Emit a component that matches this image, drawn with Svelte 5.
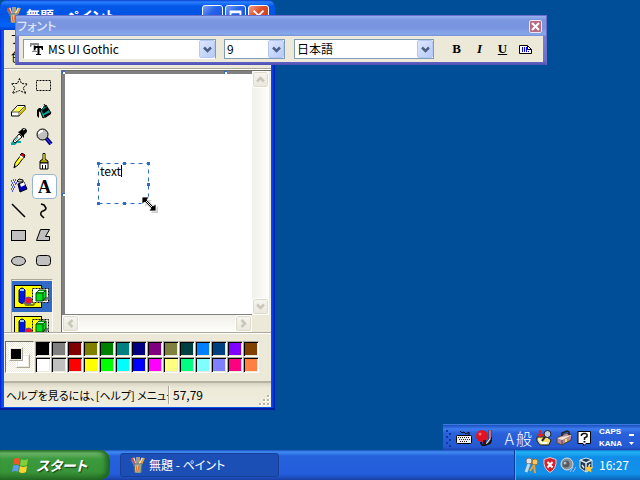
<script>
    const tools = [
        'Free-Form Select', 'Select', 'Eraser', 'Fill', 'Pick Color', 'Magnifier', 'Pencil', 'Brush',
        'Airbrush', 'Text', 'Line', 'Curve', 'Rectangle', 'Polygon', 'Ellipse', 'Rounded Rectangle'
    ];
    const colors = [
        '#000000', '#808080', '#800000', '#808000', '#008000', '#008080', '#000080',
        '#800080', '#808040', '#004040', '#0080ff', '#004080', '#8000ff', '#804000',
        '#ffffff', '#c0c0c0', '#ff0000', '#ffff00', '#00ff00', '#00ffff', '#0000ff',
        '#ff00ff', '#ffff80', '#00ff80', '#80ffff', '#8080ff', '#ff0080', '#ff8040'
    ];
    const handles = [[0, 0], [26, 0], [50, 0], [0, 21], [50, 21], [0, 40], [26, 40], [50, 40]];

    let activeTool = $state('Text');
    let foreground = $state('#000000');
    let text = $state('text');
</script>

{#snippet brushes()}
    <svg class="icon16" viewBox="0 0 16 16" aria-hidden="true">
        <path d="M3 1l2 7M8 0v8M13 1l-3 7" stroke="#eee" stroke-width="3" />
        <path d="M2 1l3 7" stroke="#d34a2c" stroke-width="2" />
        <path d="M8 0v8" stroke="#c09a50" stroke-width="2" />
        <path d="M14 1l-4 8" stroke="#e9a021" stroke-width="2" />
        <path d="M1 3l3 5" stroke="#3c8ae0" stroke-width="1" />
        <path d="M4 7h8l-1 9H5z" fill="#b9c9c5" stroke="#506b75" />
        <path d="M6 8l1 7M9 8l-1 7" stroke="#e76f2b" />
        <path d="M10 8v7" stroke="#5e8d49" />
    </svg>
{/snippet}

{#snippet chevron(dir)}
    <svg class="chevron {dir}" viewBox="0 0 9 9" aria-hidden="true">
        <path d="M1 2.5l3.500 3.500 3.500-3.500" fill="none" stroke="currentColor" stroke-width="2.500" />
    </svg>
{/snippet}

{#snippet toolIcon(name)}
    <svg class="tool-icon" viewBox="0 0 17 17" aria-hidden="true">
        {#if name === 'Free-Form Select'}
            <path d="M8.500.5l2 5 6 .5-4.500 4 3 5.500-6.500-3-7 3 2.500-5.500-3.500-4.500h6z" fill="none" stroke="#000" stroke-dasharray="2 1" />
        {:else if name === 'Select'}
            <rect x=".5" y="2.500" width="14" height="10" fill="none" stroke="#000" stroke-dasharray="2 1" />
        {:else if name === 'Eraser'}
            <path d="M.5 9l6-6.500h7.500v4l-6 6.500H.5z" fill="#fff" stroke="#000" />
            <path d="M2 9l5-5h6l-5 5z" fill="#ffff40" />
            <path d="M9 9l5-5v3l-5 5z" fill="#c8b800" />
            <path d="M1 9h7l6-6M8 9v4" fill="none" stroke="#555" />
        {:else if name === 'Fill'}
            <path d="M4 7l6-5 5 8-8 5z" fill="#00a6a0" stroke="#000" />
            <path d="M6 7l5-3 2 3-6 4zM8 12l7-3v2l-6 4z" fill="#000" />
            <path d="M8 1l3 5" stroke="#000" />
            <path d="M5 5H3L1 7v6l2 2V9l3-2" fill="#000" />
            <path d="M5 6l2-2" stroke="#fff" />
        {:else if name === 'Pick Color'}
            <path d="M0 15q2-3 5-2h5v2H6l-2 2H0z" fill="#00a6a0" />
            <path d="M3 14l-1-1 6-7 3 3-7 6z" fill="#fff" stroke="#000" />
            <path d="M4 13l3-4" stroke="#00a6a0" />
            <path d="M7 4l2-1 2-2q2-2 4 0t0 4l-2 2v3l-6-6z" fill="#000" />
            <path d="M12 2l2-1" stroke="#fff" />
        {:else if name === 'Magnifier'}
            <path d="M10 10l5 6" stroke="#000080" stroke-width="4" />
            <path d="M10 10l5 6" stroke="#4949ff" stroke-width="1" />
            <circle cx="6.500" cy="6.500" r="5.500" fill="#c0c0c0" stroke="#000" />
            <path d="M3 6q0-3 4-3" fill="none" stroke="#fff" stroke-width="2" />
        {:else if name === 'Pencil'}
            <path d="M3 15l1-5 6-8 3 2-6 8z" fill="#ffff20" stroke="#000" />
            <path d="M9 2l2-2 3 2-1 3z" fill="#e00" stroke="#000" />
            <path d="M9 3l3 2" stroke="#fff" stroke-width="2" />
            <path d="M3 15v-3l2 1z" fill="#000" />
        {:else if name === 'Brush'}
            <path d="M7 .5h2V6l3 2v2H4V8l3-2z" fill="#a9a000" stroke="#000" />
            <path d="M4 10h8v6H4z" fill="#fff" stroke="#000" />
            <path d="M6.500 12v4M9.500 12v4" stroke="#000" />
            <path d="M8 1v6" stroke="#ffff30" />
        {:else if name === 'Airbrush'}
            <path d="M0 3h1M2 2h1M4 2h1M6 3h1M1 5h1M3 4h1M5 5h1M0 7h1M2 7h1M1 9h1M3 9h1M0 11h1M2 11h1M1 13h1M4 6h1" stroke="#2020ee" stroke-width="1.500" />
            <path d="M7 6l6-2 3 7-7 3z" fill="#0000c0" stroke="#000" />
            <path d="M9 6l4-2 1 3-4 2z" fill="#fff" />
            <path d="M8 4L6 3l2-2 4 1v2z" fill="#d0d0d0" stroke="#000" />
        {:else if name === 'Line'}
            <path d="M1 1l13 13" stroke="#000" stroke-width="1.500" />
        {:else if name === 'Curve'}
            <path d="M5 1l3 1 2 3q0 2-3 3t-2 4l3 3" fill="none" stroke="#000" stroke-width="1.500" />
        {:else if name === 'Rectangle'}
            <rect x=".5" y="2.500" width="14" height="10" fill="#c0c0c0" stroke="#000" />
        {:else if name === 'Polygon'}
            <path d="M4.500 1.500h9l-4 7h4v4H.5z" fill="#c0c0c0" stroke="#000" />
        {:else if name === 'Ellipse'}
            <ellipse cx="7.500" cy="8" rx="7" ry="4.500" fill="#c0c0c0" stroke="#000" />
        {:else}
            <rect x=".5" y="2.500" width="14" height="10" rx="3" fill="#c0c0c0" stroke="#000" />
        {/if}
    </svg>
{/snippet}

{#snippet shapes(opaque)}
    <svg class="shapes" viewBox="0 0 36 24" aria-hidden="true">
        <rect x=".5" y=".5" width="27" height="22" fill="#ff0" stroke="#000" />
        <path d="M5 5q3-4 6 0v12q-3 3-6 0z" fill="#0018e8" stroke="#000060" />
        <path d="M6 5h4" stroke="#9cf" stroke-width="2" />
        <path d="M10 17l2 3h7l2-2" fill="none" stroke="#808000" stroke-width="2" />
        <circle cx="14.500" cy="15.500" r="3.500" fill="#f01030" stroke="#3060d0" />
        <rect x="18.500" y="3.500" width="16" height="14" fill={opaque ? '#fff' : 'none'} stroke="#000" stroke-dasharray="2 1" />
        <path d="M25 16h8l2-4h-4z" fill="#777" />
        <path d="M22 8l3-3h7v7l-3 4h-7z" fill="#00e020" stroke="#004000" />
        <path d="M22 8h7v8M29 8l3-3" fill="none" stroke="#004000" />
        <path d="M23 7l2-1h5l-1 1z" fill="#d0ffd0" />
    </svg>
{/snippet}

<main class="desktop">
    <div class="workspace">
        <section class="window paint">
            <header class="titlebar">
                {@render brushes()}
                <h1>無題 - ペイント</h1>
                <button class="caption" aria-label="Minimize"><svg viewBox="0 0 21 21"><path d="M5 15h7" stroke="#fff" stroke-width="3" /></svg></button>
                <button class="caption" aria-label="Maximize"><svg viewBox="0 0 21 21"><path d="M5 6h11v10H5zM5 7h11" fill="none" stroke="#fff" stroke-width="2" /></svg></button>
                <button class="caption close" aria-label="Close"><svg viewBox="0 0 21 21"><path d="M5 5l11 11M16 5L5 16" stroke="#fff" stroke-width="2" /></svg></button>
            </header>
            <nav class="menu">
                <button>ファイル(F)</button>
                <button>編集(E)</button>
                <button>表示(V)</button>
                <button>変形(I)</button>
                <button>色(C)</button>
                <button>ヘルプ(H)</button>
            </nav>
            <div class="work">
                <aside class="toolbox">
                    <div class="tools">
                        {#each tools as name}
                            <button class:active={name === activeTool} aria-label={name} onclick={() => (activeTool = name)}>
                                {#if name === 'Text'}<b>A</b>{:else}{@render toolIcon(name)}{/if}
                            </button>
                        {/each}
                    </div>
                    <div class="options">
                        <button class="selected" aria-label="Opaque">{@render shapes(true)}</button>
                        <button aria-label="Transparent">{@render shapes(false)}</button>
                    </div>
                </aside>
                <div class="view">
                    <div class="canvas">
                        <svg class="marks" aria-hidden="true">
                            <path d="M0 0h3v3H0zM162 0h3v3h-3zM0 122h3v3H0z" fill="#316ac5" />
                            <path d="M1 1h2v2H1zM163 1h2v2h-2zM1 123h2v2H1z" fill="#fff" />
                        </svg>
                        <div class="text-frame">
                            <svg viewBox="0 0 53 43" aria-hidden="true">
                                <rect x="1.500" y="1.500" width="50" height="40" fill="none" stroke="#316ac5" stroke-dasharray="4 4" />
                                {#each handles as [x, y]}
                                    <rect {x} {y} width="3" height="3" fill="#316ac5" />
                                {/each}
                            </svg>
                            <textarea aria-label="Text" bind:value={text}></textarea>
                            <i class="caret"></i>
                        </div>
                        <svg class="pointer" viewBox="0 0 18 18" aria-hidden="true">
                            <path d="M4 3h6l-2 2 6 6 2-2v7h-7l2-2-6-6-2 2z" fill="#888" opacity=".4" />
                            <path d="M0 0h7L5 3l6 6 3-2v7H7l2-3-6-6-3 2z" fill="#000" stroke="#fff" stroke-width=".8" />
                            <path d="M4 4l6 6" stroke="#fff" />
                        </svg>
                    </div>
                    <div class="scroll vertical">
                        <button aria-label="Scroll up">{@render chevron('up')}</button>
                        <button aria-label="Scroll down">{@render chevron('down')}</button>
                    </div>
                    <div class="scroll horizontal">
                        <button aria-label="Scroll left">{@render chevron('left')}</button>
                        <button aria-label="Scroll right">{@render chevron('right')}</button>
                    </div>
                </div>
            </div>
            <div class="palette">
                <div class="current">
                    <span class="back"></span>
                    <span class="front"><i style:background={foreground}></i></span>
                </div>
                <div class="swatches">
                    {#each colors as color}
                        <button aria-label={color} style:background={color} onclick={() => (foreground = color)}></button>
                    {/each}
                </div>
            </div>
            <footer class="status">
                <span class="help">ヘルプを見るには、[ヘルプ] メニュー</span>
                <span class="coords">57,79</span>
                <svg class="grip" viewBox="0 0 12 12" aria-hidden="true">
                    <path d="M9 1h3v3H9zM5 5h3v3H5zM9 5h3v3H9zM1 9h3v3H1zM5 9h3v3H5zM9 9h3v3H9z" fill="#fff" />
                    <path d="M9 1h2v2H9zM5 5h2v2H5zM9 5h2v2H9zM1 9h2v2H1zM5 9h2v2H5zM9 9h2v2H9z" fill="#b8b4a2" />
                </svg>
            </footer>
        </section>

        <section class="window fonts">
            <header>
                <h2>フォント</h2>
                <button aria-label="Close font bar"><svg viewBox="0 0 9 9"><path d="M1 1l7 7M8 1L1 8" stroke="#fff" stroke-width="2" /></svg></button>
            </header>
            <div class="font-row">
                <div class="combo face">
                    <svg class="truetype" viewBox="0 0 14 14" aria-hidden="true">
                        <path d="M0 1h9v4H8L7 3H5.500v6H7v1H2V9h1.500V3H2L1 5H0z" fill="#888" />
                        <path d="M4 4h9v4h-1l-1-2h-1.500v6H11v1H6v-1h1.500V6H6L5 8H4z" fill="#000" />
                    </svg>
                    <select aria-label="Font"><option>MS UI Gothic</option></select>
                    <span class="arrow">{@render chevron('down')}</span>
                </div>
                <div class="combo size">
                    <select aria-label="Size"><option>9</option></select>
                    <span class="arrow">{@render chevron('down')}</span>
                </div>
                <div class="combo script">
                    <select aria-label="Script"><option>日本語</option></select>
                    <span class="arrow">{@render chevron('down')}</span>
                </div>
                <div class="styles">
                    <button class="bold">B</button>
                    <button class="italic">I</button>
                    <button class="underline">U</button>
                    <button aria-label="Vertical text">
                        <svg class="vertical-text" viewBox="0 0 13 9">
                            <path d="M.5.5h8l4 4v4H.5z" fill="#fff" stroke="#000" />
                            <path d="M8.500.5v4h4" fill="none" stroke="#000" />
                            <path d="M3.500 2v5M5.500 2v5M7.500 2v5M9.500 6v1" stroke="#00f" />
                        </svg>
                    </button>
                </div>
            </div>
        </section>

        <section class="language-bar">
            <svg class="dots" viewBox="0 0 6 18" aria-hidden="true">
                <path d="M0 1h2v2H0zM3 4h2v2H3zM0 7h2v2H0zM3 10h2v2H3zM0 13h2v2H0zM3 16h2v2H3z" fill="#0c3a9c" />
            </svg>
            <button aria-label="Keyboard">
                <svg class="icon16" viewBox="0 0 16 16">
                    <path d="M4 1l2 2 2-1 2 2 3-2v3" fill="none" stroke="#000" />
                    <rect x=".5" y="5.500" width="15" height="8" rx="1" fill="#eee" stroke="#000" />
                    <path d="M2 7.500h12M3 9.500h11M4 11.500h8" stroke="#222" stroke-dasharray="1 1" />
                </svg>
            </button>
            <button aria-label="Input method">
                <svg class="icon16" viewBox="0 0 16 16">
                    <path d="M5 12q0 4 4 3l5-2 2-6" fill="none" stroke="#111" stroke-width="2" />
                    <circle cx="6" cy="6" r="6" fill="#e01420" />
                    <circle cx="4" cy="4" r="1.500" fill="#ff7070" />
                    <path d="M13 0h2v9l-4 5H9l4-5z" fill="#fff" stroke="#222" stroke-width=".6" />
                    <path d="M14 0v9" stroke="#d22" />
                    <path d="M7 10h3v4H7z" fill="#500" />
                </svg>
            </button>
            <div class="mode">
                <button>A</button>
                <button>般</button>
            </div>
            <button aria-label="IME Pad">
                <svg class="icon16" viewBox="0 0 16 16">
                    <path d="M1 7h10l4 3-2 5H4l-3-4z" fill="#f2df6c" stroke="#222" />
                    <path d="M4 0v7M1 5h6" stroke="#d22" stroke-width="2" />
                    <path d="M3 9l3 4h5" fill="none" stroke="#fff" stroke-width="2" />
                    <path d="M9 7L6 11" stroke="#222" stroke-width="2" />
                    <circle cx="11.500" cy="4" r="3.500" fill="#b7cfe4" stroke="#222" />
                </svg>
            </button>
            <button aria-label="Tools">
                <svg class="icon16" viewBox="0 0 16 16">
                    <path d="M1 8l9-5 6 2-1 5-9 5-5-2z" fill="#b98a94" stroke="#443" />
                    <path d="M1 8l5 2 10-5z" fill="#f4e4d4" />
                    <path d="M6 10v5" stroke="#5c3848" />
                    <path d="M6 6V3l5-2 2 1v3" fill="none" stroke="#222" stroke-width="1.500" />
                    <path d="M9 9h2v3H9z" fill="#eee070" />
                </svg>
            </button>
            <button aria-label="Help">
                <svg class="icon16" viewBox="0 0 16 16">
                    <path d="M2 1.500h12.500v12H10L8 15.500l-1-2H2z" fill="#fff" stroke="#000" />
                    <path d="M5.500 6V4.500l2-1h2l1.500 1v2L8.500 8v2" fill="none" stroke="#111" stroke-width="1.500" />
                    <path d="M7.500 11h2v1.500h-2z" fill="#111" />
                </svg>
            </button>
            <div class="locks"><span>CAPS</span><span>KANA</span></div>
            <svg class="bar-ends" viewBox="0 0 7 22" aria-hidden="true">
                <path d="M1 7h5v2H1zM1 15h5l-2.500 3z" fill="#fff" />
            </svg>
        </section>
    </div>

    <footer class="taskbar">
        <button class="start">
            <svg class="flag" viewBox="0 0 18 18" aria-hidden="true">
                <path d="M3 3q3-2 6 0L8 9q-3-2-6 0z" fill="#f0562a" />
                <path d="M10 3q3 2 7 0l-1 6q-4 2-7 0z" fill="#7fd03a" />
                <path d="M2 10q3-2 6 0l-1 6q-3-2-6 0z" fill="#5b9cf5" />
                <path d="M9 10q3 2 7 0l-1 6q-4 2-7 0z" fill="#ffd42a" />
            </svg>
            スタート
        </button>
        <button class="task">{@render brushes()}無題 - ペイント</button>
        <div class="tray">
            <svg class="icon16" viewBox="0 0 16 16" aria-hidden="true">
                <circle cx="5" cy="4" r="3" fill="#dfe4e8" stroke="#777" />
                <path d="M5 7l-3 8" stroke="#d0d4d8" stroke-width="3" />
                <circle cx="11" cy="5" r="3" fill="#f6c766" stroke="#a56b20" />
                <path d="M10 8l1 8M10 8l-4 6" stroke="#e3a341" stroke-width="2" />
            </svg>
            <svg class="icon16" viewBox="0 0 16 16" aria-hidden="true">
                <path d="M8 .5l6 2q1 9-6 13-7-4-6-13z" fill="#d8202c" stroke="#e8c8c8" />
                <path d="M5.500 5l5 5.500M10.500 5l-5 5.500" stroke="#fff" stroke-width="2" />
            </svg>
            <svg class="icon16" viewBox="0 0 16 16" aria-hidden="true">
                <circle cx="7" cy="7" r="6" fill="#8d9298" stroke="#d7dadd" />
                <circle cx="6" cy="7" r="3.500" fill="#555a60" />
                <circle cx="5" cy="6" r="1.500" fill="#b8bcc0" />
                <path d="M10 15l3-5M13 15l3-5" stroke="#a9b8f4" />
            </svg>
            <svg class="icon16" viewBox="0 0 16 16" aria-hidden="true">
                <path d="M8 1l6 2v8l-6 4-6-4V3z" fill="#20394f" stroke="#d8e4ec" />
                <path d="M2 3l6 3 6-3M8 6v9M4 8l2 3M12 7l-2 4" fill="none" stroke="#d8e4ec" stroke-width="1.500" />
                <path d="M11 8l1 2 3 .5-2 2 .5 3-2.500-1.500-2.500 1.500.5-3-2-2L10 10z" fill="#ffc835" />
            </svg>
            <time>16:27</time>
        </div>
    </footer>
</main>

<style>
    :global(body) {
        margin: 0;
        background: #004e98;
    }

    .desktop {
        display: flex;
        flex-direction: column;
        min-height: 100vh;
        overflow: hidden;
        font-family: 'Noto Sans CJK JP', sans-serif;
        font-feature-settings: 'palt';
        font-size: 12px;
        line-height: 16px;
        color: #000;
        background: #004e98;
    }

    .desktop * {
        box-sizing: border-box;
    }

    button {
        padding: 0;
        border: 0;
        background: none;
        font: inherit;
        font-feature-settings: inherit;
        color: inherit;
    }

    svg {
        display: block;
        flex: none;
    }

    h1,
    h2 {
        flex: 1;
        margin: 0;
        white-space: nowrap;
    }

    .icon16 {
        width: 16px;
        height: 16px;
    }

    .workspace {
        position: relative;
        flex: 1;
        min-height: 450px;
    }

    .window {
        position: absolute;
    }

    /* paint window */
    .paint {
        top: 0;
        left: 0;
        width: 275px;
        padding: 0 4px 3px;
        border-radius: 8px 8px 0 0;
        background: linear-gradient(90deg, #0019cf 0, #0a4ef0 2px, #0855dd 4px, #0855dd calc(100% - 4px), #0048f0 calc(100% - 3px), #0018a8 100%);
        box-shadow: inset 0 -2px #001ea0;
    }

    .titlebar {
        display: flex;
        align-items: center;
        gap: 2px;
        height: 30px;
        margin: 0 -4px;
        padding: 0 6px;
        border-radius: 8px 8px 0 0;
        background: linear-gradient(#0a3fd0 0, #2a80ff 2px, #0458e8 6px, #0054e3 16px, #0062fa 26px, #0040c8 100%);
        color: #fff;
    }

    .titlebar h1 {
        padding-left: 2px;
        font-size: 14px;
        line-height: 18px;
    }

    .caption {
        width: 21px;
        height: 21px;
        border: 1px solid #fff;
        border-radius: 3px;
        background: linear-gradient(135deg, #7a9ff5, #2663e8 40%, #1c50d8);
    }

    .caption.close {
        background: linear-gradient(135deg, #f0a088, #dd4e2c 40%, #c83a18);
    }

    .menu {
        display: flex;
        flex-wrap: wrap;
        padding: 0 0 2px;
        border-bottom: 1px solid #aca899;
        background: #ece9d8;
    }

    .menu button {
        height: 18px;
        padding: 0 7px;
    }

    .work {
        display: grid;
        grid-template-columns: 57px 1fr;
        height: 264px;
        border-top: 1px solid #fff;
        border-bottom: 1px solid #aca899;
        background: #ece9d8;
        overflow: hidden;
    }

    .toolbox {
        padding: 4px 3px 0;
        min-height: 0;
        overflow: hidden;
    }

    .tools {
        display: grid;
        grid-template-columns: 25px 25px;
    }

    .tools button {
        display: grid;
        place-items: center;
        height: 25px;
        border: 1px solid transparent;
        border-radius: 4px;
    }

    .tools .active {
        border-color: #98b5d0;
        background: #fff;
    }

    .tools b {
        font: bold 18px/18px 'Liberation Serif', serif;
    }

    .tool-icon {
        width: 17px;
        height: 17px;
    }

    .options {
        display: grid;
        width: 42px;
        margin: 5px 0 0 4px;
        padding-top: 1px;
        border: 1px solid;
        border-color: #aca899 #fff #fff #aca899;
    }

    .options button {
        height: 31px;
        padding: 3px 2px;
    }

    .options .selected {
        background: #316ac5;
    }

    .shapes {
        width: 36px;
        height: 24px;
    }

    .view {
        display: grid;
        grid-template-columns: 1fr 17px;
        grid-template-rows: 1fr 17px;
        min-height: 0;
        padding-right: 2px;
        border-left: 1px solid #716f64;
        border-top: 1px solid #716f64;
    }

    .canvas {
        position: relative;
        border-bottom: 1px solid #808080;
        background: linear-gradient(#fff, #fff) 3px 3px no-repeat, #808080;
        overflow: hidden;
    }

    .marks {
        position: absolute;
        inset: 0;
        width: 100%;
        height: 100%;
    }

    .text-frame {
        position: absolute;
        top: 91px;
        left: 35px;
        width: 53px;
        height: 43px;
    }

    .text-frame svg {
        width: 53px;
        height: 43px;
    }

    textarea {
        position: absolute;
        inset: 2px;
        width: 48px;
        height: 38px;
        padding: 0 1px;
        border: 0;
        outline: 0;
        background: none;
        resize: none;
        overflow: hidden;
        font: 12px/14px 'Noto Sans CJK JP', sans-serif;
    }

    .caret {
        position: absolute;
        top: 3px;
        left: 24px;
        width: 1px;
        height: 12px;
        background: #000;
    }

    .pointer {
        position: absolute;
        top: 126px;
        left: 80px;
        width: 18px;
        height: 18px;
        overflow: visible;
    }

    .scroll {
        display: flex;
        justify-content: space-between;
        background: linear-gradient(90deg, #f0efe8, #fefefb);
    }

    .scroll.vertical {
        flex-direction: column;
    }

    .scroll.horizontal {
        background: linear-gradient(#f0efe8, #fefefb);
    }

    .scroll button {
        display: grid;
        place-items: center;
        width: 17px;
        height: 17px;
        border: 1px solid #fff;
        border-radius: 3px;
        background: linear-gradient(#f6f5ef, #eae8dc);
        box-shadow: inset 0 0 0 1px #dedbcb;
        color: #c9c7ba;
    }

    .chevron {
        width: 9px;
        height: 9px;
    }

    .up {
        transform: rotate(180deg);
    }

    .left {
        transform: rotate(90deg);
    }

    .right {
        transform: rotate(-90deg);
    }

    .palette {
        display: flex;
        gap: 1px;
        padding: 7px 0 8px 1px;
        border-top: 1px solid #fff;
        background: #ece9d8;
    }

    .current {
        position: relative;
        width: 29px;
        height: 32px;
        border: 1px solid;
        border-color: #716f64 #fff #fff #716f64;
        background: repeating-conic-gradient(#fff 0 25%, #ece9d8 0 50%) 0 0 / 2px 2px;
    }

    .front,
    .back {
        position: absolute;
        width: 14px;
        height: 14px;
        border: 1px solid;
        border-color: #fff #aca899 #aca899 #fff;
        background: #ece9d8;
    }

    .front {
        top: 5px;
        left: 3px;
    }

    .front i {
        display: block;
        height: 12px;
        border: 1px solid #ece9d8;
    }

    .back {
        top: 12px;
        left: 10px;
        background: #fff;
        box-shadow: inset 0 0 0 1px #ece9d8;
    }

    .swatches {
        display: grid;
        grid-template-columns: repeat(14, 16px);
        grid-auto-rows: 16px;
    }

    .swatches button {
        border: 1px solid;
        border-color: #aca899 #fff #fff #aca899;
        box-shadow: inset 1px 1px #000, inset -1px -1px #ece9d8;
    }

    .status {
        display: flex;
        align-items: center;
        height: 26px;
        border-top: 2px solid #b5b2a2;
        background: linear-gradient(#d8d5c6, #ece9d8 5px, #f0eee0);
        line-height: 18px;
        white-space: nowrap;
    }

    .help {
        width: 164px;
        padding-left: 2px;
        overflow: hidden;
        font-size: 11px;
    }

    .coords {
        flex: 1;
        padding-left: 4px;
        border-left: 1px solid #aca899;
        box-shadow: inset 1px 0 #fff;
    }

    .grip {
        align-self: flex-end;
        width: 12px;
        height: 12px;
        margin: 0 1px 1px 0;
    }

    /* floating font bar */
    .fonts {
        top: 15px;
        left: 15px;
        width: 532px;
        padding: 0 3px 3px;
        border: solid #6a6fcc;
        border-width: 1px 1px 0;
        background: linear-gradient(#7b8fe0, #6a6fcc 90%, #5050b4);
    }

    .fonts header {
        display: flex;
        align-items: center;
        height: 20px;
        margin: 0 -3px;
        padding: 0 4px 0 1px;
        background: linear-gradient(#98aef0, #7a96df 4px, #7a94e0 12px, #87a8ea 18px, #7890dc);
    }

    .fonts h2 {
        font-size: 12px;
        font-weight: 500;
        line-height: 18px;
        color: #dbe5fb;
    }

    .fonts header button {
        display: grid;
        place-items: center;
        width: 13px;
        height: 13px;
        border: 1px solid #e8e8f8;
        border-radius: 2px;
        background: #b86a80;
    }

    .fonts header svg {
        width: 9px;
        height: 9px;
    }

    .font-row {
        display: flex;
        gap: 8px;
        padding: 3px 4px;
        background: #ece9d8;
    }

    .combo {
        display: flex;
        align-items: center;
        height: 20px;
        border: 1px solid #7f9db9;
        background: #fff;
    }

    .face {
        width: 193px;
        padding-left: 6px;
        border-bottom-color: #fff;
    }

    .size {
        width: 61px;
        margin-right: 1px;
    }

    .script {
        width: 140px;
    }

    .truetype {
        width: 14px;
        height: 14px;
    }

    select {
        appearance: none;
        flex: 1;
        min-width: 0;
        height: 18px;
        padding: 0 2px;
        border: 0;
        outline: 0;
        background: none;
        font: 12px/18px 'Noto Sans CJK JP', sans-serif;
        color: #000;
    }

    .face select {
        padding-left: 4px;
    }

    .arrow {
        display: grid;
        place-items: center;
        width: 16px;
        height: 18px;
        border: 1px solid #b4c8f6;
        border-radius: 2px;
        background: linear-gradient(135deg, #dce6fe, #b7cbf8);
        color: #4d6185;
        pointer-events: none;
    }

    .styles {
        display: flex;
        padding-left: 3px;
        font-family: 'Liberation Serif', serif;
    }

    .styles button {
        display: grid;
        place-items: center;
        width: 23px;
        height: 20px;
        font-size: 13px;
        font-weight: bold;
    }

    .italic {
        font-style: italic;
    }

    .underline {
        text-decoration: underline;
    }

    .vertical-text {
        width: 13px;
        height: 9px;
    }

    /* language bar */
    .language-bar {
        position: absolute;
        right: 0;
        bottom: 0;
        display: flex;
        align-items: center;
        gap: 4px;
        height: 26px;
        padding: 0 5px 0 3px;
        border-top: 1px solid #3b78e0;
        background: linear-gradient(#1c4fc0, #3d7dee 4px, #2a62dc 8px, #2459d2 22px, #1a45b0);
        color: #fff;
    }

    .dots {
        width: 6px;
        height: 18px;
    }

    .mode {
        display: flex;
        gap: 2px;
        padding-left: 8px;
        font-size: 16px;
        line-height: 20px;
        font-weight: 300;
    }

    .locks {
        display: grid;
        margin: 0 2px 0 3px;
        font: bold 8px/12px 'Liberation Sans', sans-serif;
    }

    .bar-ends {
        width: 7px;
        height: 22px;
    }

    /* taskbar */
    .taskbar {
        display: flex;
        align-items: center;
        height: 30px;
        background: linear-gradient(#1f4fc0, #3f8cf3 2px, #2661dc 6px, #245edb 24px, #1941a5);
        color: #fff;
    }

    .start {
        display: flex;
        align-items: center;
        gap: 7px;
        width: 110px;
        height: 30px;
        padding-left: 11px;
        border-radius: 0 10px 10px 0;
        background: linear-gradient(#2f7a2f, #6db56b 3px, #3a9a3c 9px, #389438 22px, #256d26);
        box-shadow: inset -4px 0 5px #1d641f;
        font-size: 14px;
        font-style: italic;
        font-weight: bold;
        text-shadow: 1px 1px 1px #123c12;
    }

    .flag {
        width: 18px;
        height: 18px;
    }

    .task {
        display: flex;
        align-items: center;
        gap: 3px;
        width: 159px;
        height: 24px;
        margin-left: 10px;
        padding-left: 9px;
        border: 1px solid #173f96;
        border-radius: 3px;
        background: #1c4fb5;
    }

    .tray {
        display: flex;
        align-items: center;
        gap: 2px;
        height: 30px;
        margin-left: auto;
        padding: 0 11px 0 9px;
        border-left: 1px solid #0b3e9c;
        background: linear-gradient(#0f6fd0, #1fb4f5 2px, #118de8 7px, #1290ea 24px, #0b62b5);
        box-shadow: inset 1px 0 #30b8f5;
    }

    time {
        padding-left: 3px;
    }
</style>
